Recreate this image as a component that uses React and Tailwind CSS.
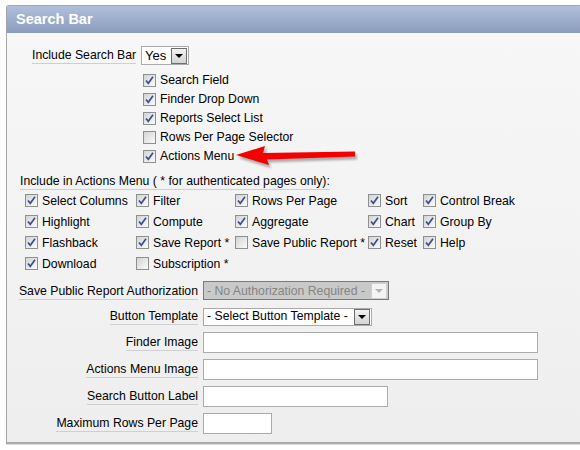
import React from "react";

function Check({ checked }) {
  return (
    <span className="inline-flex w-[13px] h-[13px] shrink-0 border border-[#8e8f8f] bg-gradient-to-br from-[#d3d3d3] to-[#fbfbfb] items-center justify-center">
      {checked && (
        <svg width="11" height="11" viewBox="0 0 11 11">
          <path d="M2 5.5 L4.3 8.3 L9 1.8" fill="none" stroke="#3e5089" strokeWidth="1.7" />
        </svg>
      )}
    </span>
  );
}

function Arrow({ disabled }) {
  return (
    <span
      className={
        "inline-flex w-[16px] h-[16px] items-center justify-center border " +
        (disabled ? "border-[#d0d0d0] bg-[#f4f4f4]" : "border-[#6e6e6e] bg-gradient-to-b from-[#f2f2f2] to-[#d4d4d4]")
      }
    >
      <svg width="8" height="4" viewBox="0 0 8 4">
        <path d="M0 0 L8 0 L4 4 Z" fill={disabled ? "#b4b4b4" : "#000"} />
      </svg>
    </span>
  );
}

function Label({ children }) {
  return <span className="inline-block border-b border-[#cfcfcf] leading-[16px]">{children}</span>;
}

const sbItems = [
  ["Search Field", true],
  ["Finder Drop Down", true],
  ["Reports Select List", true],
  ["Rows Per Page Selector", false],
  ["Actions Menu", true],
];

const grid = [
  [["Select Columns", true], ["Filter", true], ["Rows Per Page", true], ["Sort", true], ["Control Break", true]],
  [["Highlight", true], ["Compute", true], ["Aggregate", true], ["Chart", true], ["Group By", true]],
  [["Flashback", true], ["Save Report *", true], ["Save Public Report *", false], ["Reset", true], ["Help", true]],
  [["Download", true], ["Subscription *", false]],
];

const colW = ["w-[111px]", "w-[99px]", "w-[133px]", "w-[55px]", "w-[120px]"];

function FormRow({ label, children, className }) {
  return (
    <div className={"flex items-center " + className}>
      <div className="w-[191px] text-right">
        <Label>{label}</Label>
      </div>
      <div className="ml-[5px] flex">{children}</div>
    </div>
  );
}

export default function App() {
  return (
    <div className="relative w-[580px] h-[450px] overflow-hidden bg-white text-[12.25px] text-black" style={{ fontFamily: '"Liberation Sans", Arial, sans-serif' }}>
      <div className="ml-[6px] mt-[5px] w-[600px] h-[439px] border border-[#a6a6a6] border-b-2 border-b-[#ababab] rounded-tl-[3px] flex flex-col shadow-[0_1px_0_#dcdcdc]">
        <div className="h-[27px] shrink-0 bg-gradient-to-b from-[#b1bfdb] to-[#8a9cbd] text-white font-bold text-[14.5px] pl-[9px] flex items-center">
          Search Bar
        </div>
        <div className="flex-1 bg-gradient-to-b from-[#f7f7f7] to-[#eeeeee]">
          <div className="mt-[13px] flex items-center h-[19px] pl-[25px]">
            <div className="w-[109px]">
              <Label>Include Search Bar</Label>
            </div>
            <div className="flex items-center h-[19px] w-[48px] bg-white border border-[#ababab] pl-[3px] pr-[1px] justify-between text-[13px]">
              <span>Yes</span>
              <Arrow />
            </div>
          </div>
          <div className="mt-[6px] pl-[136px]">
            {sbItems.map(([t, c]) => (
              <div key={t} className="flex items-center h-[19px] gap-[4px]">
                <Check checked={c} />
                <span>{t}</span>
              </div>
            ))}
          </div>
          <div className="mt-[6px] pl-[13px]">
            <Label>Include in Actions Menu ( * for authenticated pages only):</Label>
          </div>
          <div className="pl-[18px]">
            {grid.map((row, i) => (
              <div key={i} className="flex h-[21px] items-center">
                {row.map(([t, c], j) => (
                  <div key={t} className={"flex items-center gap-[4px] " + colW[j]}>
                    <Check checked={c} />
                    <span className="whitespace-nowrap">{t}</span>
                  </div>
                ))}
              </div>
            ))}
          </div>
          <FormRow label="Save Public Report Authorization" className="mt-[7px]">
            <div className="flex items-center h-[19px] w-[186px] bg-[#c9c9c9] border border-[#7a7a7a] pl-[3px] pr-[1px] justify-between text-[#858585]">
              <span>- No Authorization Required -</span>
              <Arrow disabled />
            </div>
          </FormRow>
          <FormRow label="Button Template" className="mt-[7px]">
            <div className="flex items-center h-[18px] w-[169px] bg-white border border-[#ababab] pl-[3px] pr-[1px] justify-between">
              <span>- Select Button Template -</span>
              <Arrow />
            </div>
          </FormRow>
          <FormRow label="Finder Image" className="mt-[6px]">
            <div className="h-[21px] w-[335px] bg-white border border-[#ababab]" />
          </FormRow>
          <FormRow label="Actions Menu Image" className="mt-[6px]">
            <div className="h-[21px] w-[335px] bg-white border border-[#ababab]" />
          </FormRow>
          <FormRow label="Search Button Label" className="mt-[6px]">
            <div className="h-[21px] w-[185px] bg-white border border-[#ababab]" />
          </FormRow>
          <FormRow label="Maximum Rows Per Page" className="mt-[6px]">
            <div className="h-[21px] w-[69px] bg-white border border-[#ababab]" />
          </FormRow>
        </div>
      </div>
      <svg className="absolute left-[230px] top-[140px]" width="135" height="30" viewBox="0 0 135 30">
        <defs>
          <filter id="sh" x="-10%" y="-50%" width="120%" height="200%">
            <feGaussianBlur stdDeviation="1.2" />
          </filter>
        </defs>
        <polygon points="6,15 35,6 33,13 125,11.5 125,16.5 37,19.5 39,25" fill="#555" opacity="0.45" transform="translate(2,3)" filter="url(#sh)" />
        <polygon points="6,15 35,6 33,13 125,11.5 125,16.5 37,19.5 39,25" fill="#f40000" />
      </svg>
    </div>
  );
}
